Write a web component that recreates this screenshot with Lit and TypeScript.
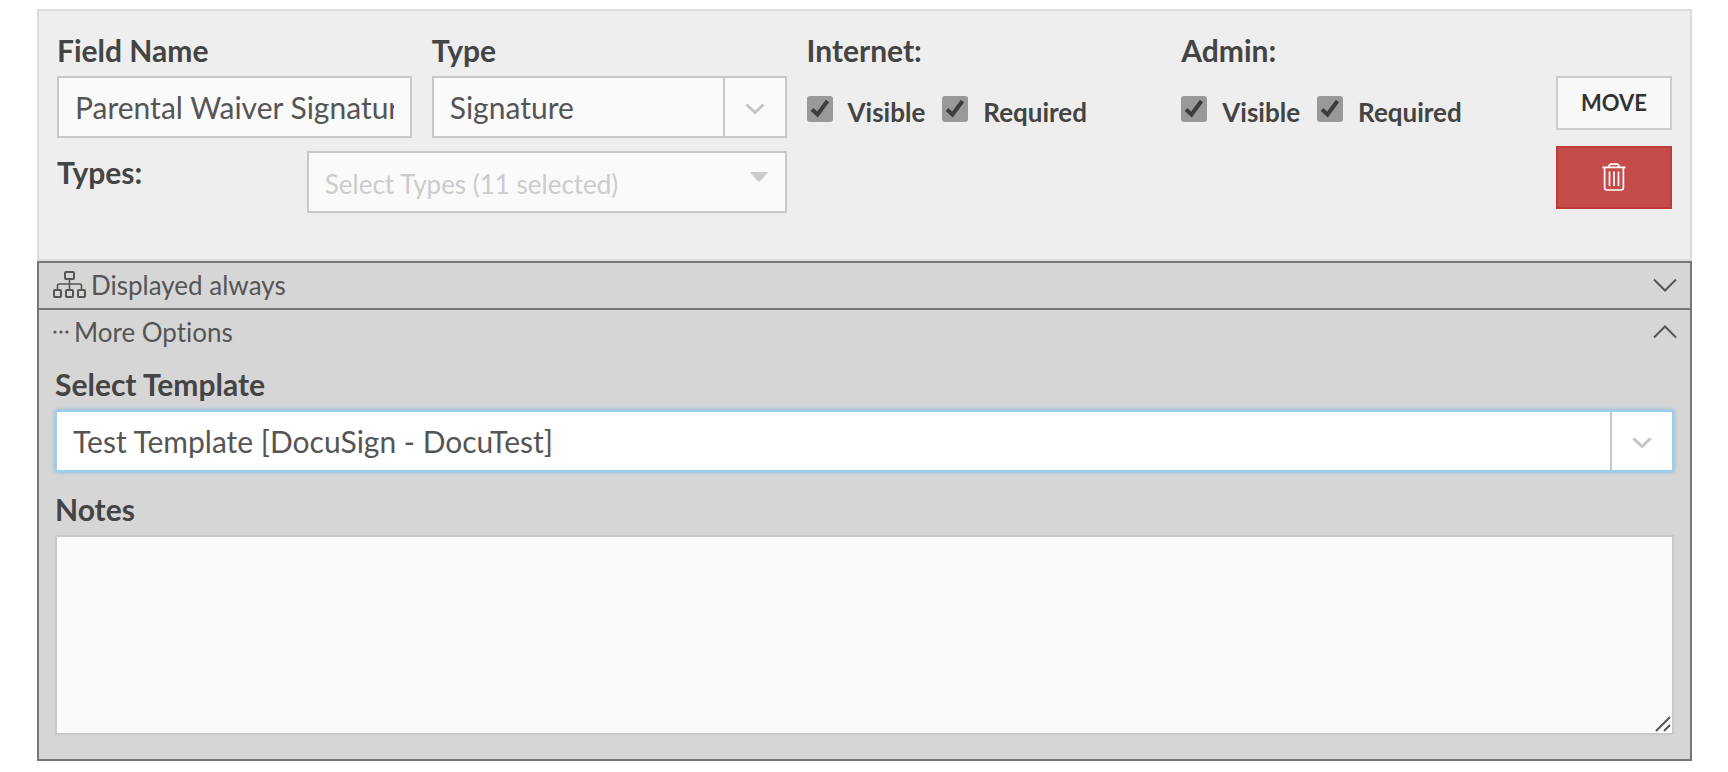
import { LitElement, html, css } from "lit";
import { customElement, state } from "lit/decorators.js";

const chevron = html`<svg class="chevron" viewBox="0 0 20 12" aria-hidden="true">
  <path d="M1.5 1.5 L10 9.5 L18.5 1.5" />
</svg>`;

@customElement("app-root")
export class AppRoot extends LitElement {
  @state() private rulesOpen = false;
  @state() private optionsOpen = true;

  static styles = css`
    :host {
      display: block;
      padding: 9px 36px 11px 37px;
      background: #fff;
      color: #444;
      font: 400 26px/32px Lato, "Open Sans", sans-serif;
      font-variant-ligatures: none;
    }
    * {
      box-sizing: border-box;
    }
    input,
    select,
    textarea,
    button {
      margin: 0;
      font: inherit;
      font-variant-ligatures: none;
      color: inherit;
      border-radius: 0;
      outline: none;
    }
    button {
      cursor: pointer;
    }
    svg {
      display: block;
      fill: none;
      stroke: currentColor;
    }
    .summary {
      display: grid;
      grid-template-columns: repeat(4, minmax(0, 1fr)) 116px;
      gap: 13px 20px;
      padding: 21px 18px 46px;
      background: #eee;
      border: 2px solid #dcdcdc;
    }
    .field {
      display: flex;
      flex-direction: column;
      gap: 8px;
      min-width: 0;
    }
    .title {
      font-size: 30px;
      line-height: 36px;
      font-weight: 700;
    }
    .control {
      width: 100%;
      height: 62px;
      padding: 0 16px;
      font-size: 30px;
      line-height: 40px;
      color: #555;
      background: #fafafa;
      border: 2px solid #c8c8c8;
      appearance: none;
    }
    .picker {
      display: grid;
      grid-template-columns: minmax(0, 1fr) 64px;
    }
    .picker > * {
      grid-row: 1;
    }
    .picker select {
      grid-column: 1 / 3;
    }
    .arrow {
      grid-column: 2;
      display: flex;
      align-items: center;
      justify-content: center;
      margin: 2px 2px 2px 0;
      border-left: 2px solid #c8c8c8;
      color: #c4c4c4;
      pointer-events: none;
    }
    .chevron {
      width: 20px;
      height: 12px;
      margin-top: 4px;
      stroke-width: 3;
    }
    .focused .control {
      background: #fff;
      border-color: #9bcfef;
      border-radius: 2px;
      box-shadow: 0 0 4px #7fb4dc;
    }
    .types {
      grid-column: 1 / 3;
      display: grid;
      grid-template-columns: repeat(3, minmax(0, 1fr));
      gap: 20px;
    }
    .types .title {
      padding-top: 3px;
    }
    .types .picker {
      grid-column: span 2;
    }
    .types .control {
      padding-top: 4px;
      font-size: 26px;
      color: #ccc;
    }
    .types .arrow {
      align-items: flex-start;
      padding: 19px 0 0 10px;
      border: 0;
    }
    .caret {
      width: 18px;
      height: 10px;
      fill: #ccc;
      stroke: none;
    }
    .checks {
      display: flex;
      gap: 17px;
      padding-top: 20px;
      font-weight: 700;
    }
    .check {
      display: flex;
      gap: 15px;
    }
    .box {
      display: grid;
      width: 26px;
      height: 26px;
    }
    .box > * {
      grid-area: 1 / 1;
    }
    .box input {
      width: 26px;
      height: 26px;
      appearance: none;
      background: #999;
      border-radius: 3px;
    }
    .box svg {
      width: 26px;
      height: 26px;
      stroke: #3d3d3d;
      stroke-width: 4;
      pointer-events: none;
      visibility: hidden;
    }
    .box input:checked + svg {
      visibility: visible;
    }
    .actions {
      grid-column: 5;
      grid-row: 1 / 3;
      display: flex;
      flex-direction: column;
      gap: 16px;
      padding-top: 44px;
    }
    .move {
      height: 54px;
      padding: 0;
      font-size: 22px;
      font-weight: 700;
      color: #333;
      background: #f8f8f8;
      border: 2px solid #ccc;
    }
    .remove {
      display: flex;
      align-items: flex-start;
      justify-content: center;
      height: 63px;
      padding: 15px 0 0;
      color: #fff;
      background: #c44d4b;
      border: 2px solid #be3c38;
    }
    .trash {
      width: 24px;
      height: 28px;
    }
    .details {
      background: #d6d6d6;
      border: 2px solid #777;
      color: #555;
    }
    .toggle {
      display: flex;
      align-items: center;
      gap: 5px;
      width: 100%;
      height: 45px;
      padding: 0 13px 2px 14px;
      text-align: left;
      background: none;
      border: 0;
    }
    .toggle span {
      flex: 1;
    }
    .more {
      height: 47px;
      border-top: 2px solid #777;
    }
    .fold {
      width: 24px;
      height: 14px;
      stroke-width: 2;
    }
    .tree {
      width: 33px;
      height: 27px;
      stroke-width: 2;
    }
    .dots {
      width: 16px;
      height: 4px;
      fill: currentColor;
      stroke: none;
    }
    .body {
      display: flex;
      flex-direction: column;
      gap: 19px;
      padding: 11px 16px 24px;
    }
    .body .title {
      color: #444;
    }
    .notes {
      display: grid;
    }
    .notes > * {
      grid-area: 1 / 1;
    }
    .notes .control {
      display: block;
      height: 200px;
      padding: 12px 16px;
      resize: none;
    }
    .grip {
      place-self: end;
      width: 16px;
      height: 16px;
      margin: 3px;
      stroke: #555;
      stroke-width: 2;
      pointer-events: none;
    }
  `;

  private check(id: string, text: string) {
    return html`<label class="check" for=${id}>
      <span class="box">
        <input id=${id} type="checkbox" checked />
        <svg viewBox="0 0 26 26" aria-hidden="true"><path d="M5 13.5 L10.5 18.5 L20.5 5" /></svg>
      </span>
      ${text}
    </label>`;
  }

  private access(name: string) {
    const id = name.toLowerCase();
    return html`<div class="field" role="group" aria-labelledby=${id}>
      <div class="title" id=${id}>${name}:</div>
      <div class="checks">
        ${this.check(`${id}-visible`, "Visible")} ${this.check(`${id}-required`, "Required")}
      </div>
    </div>`;
  }

  private fold(open: boolean) {
    return html`<svg class="fold" viewBox="0 0 24 14" aria-hidden="true">
      <path d=${open ? "M1 12.5 L12 1.5 L23 12.5" : "M1 1.5 L12 12.5 L23 1.5"} />
    </svg>`;
  }

  render() {
    return html`
      <section class="summary">
        <div class="field">
          <label class="title" for="name">Field Name</label>
          <input class="control" id="name" type="text" value="Parental Waiver Signature" />
        </div>
        <div class="field">
          <label class="title" for="type">Type</label>
          <div class="picker">
            <select class="control" id="type">
              <option>Signature</option>
            </select>
            <span class="arrow">${chevron}</span>
          </div>
        </div>
        ${this.access("Internet")} ${this.access("Admin")}
        <div class="types">
          <label class="title" for="types">Types:</label>
          <div class="picker">
            <select class="control" id="types">
              <option>Select Types (11 selected)</option>
            </select>
            <span class="arrow">
              <svg class="caret" viewBox="0 0 18 10" aria-hidden="true">
                <path d="M1 0 H17 Q18.5 0 17.4 1.2 L10 9.3 Q9 10.4 8 9.3 L.6 1.2 Q-.5 0 1 0 Z" />
              </svg>
            </span>
          </div>
        </div>
        <div class="actions">
          <button class="move" type="button">MOVE</button>
          <button class="remove" type="button" aria-label="Delete field">
            <svg class="trash" viewBox="0 0 24 28" aria-hidden="true">
              <path
                stroke-width="1.7"
                d="M.5 4.4 H23.5 M6.9 4 Q7 1.1 9.3 1.1 H14.7 Q17 1.1 17.1 4 M2.6 4.5 V24.6 Q2.6 27 5 27 H19 Q21.4 27 21.4 24.6 V4.5 M7.5 8.5 V23 M12 8.5 V23 M16.5 8.5 V23"
              />
            </svg>
          </button>
        </div>
      </section>

      <section class="details">
        <button
          class="toggle"
          type="button"
          aria-expanded=${this.rulesOpen}
          @click=${() => (this.rulesOpen = !this.rulesOpen)}
        >
          <svg class="tree" viewBox="0 0 33 27" aria-hidden="true">
            <rect x="12" y="1" width="9" height="7" rx="1" />
            <rect x="1" y="19" width="7" height="7" rx="1" />
            <rect x="13" y="19" width="7" height="7" rx="1" />
            <rect x="25" y="19" width="7" height="7" rx="1" />
            <path stroke-width="1.6" d="M16.5 8 V19 M4.5 19 V14.5 Q4.5 13 6 13 H27 Q28.5 13 28.5 14.5 V19" />
          </svg>
          <span>Displayed always</span>
          ${this.fold(this.rulesOpen)}
        </button>
        <button
          class="toggle more"
          type="button"
          aria-expanded=${this.optionsOpen}
          @click=${() => (this.optionsOpen = !this.optionsOpen)}
        >
          <svg class="dots" viewBox="0 0 16 4" aria-hidden="true">
            <circle cx="2" cy="2" r="1.6" />
            <circle cx="8" cy="2" r="1.6" />
            <circle cx="14" cy="2" r="1.6" />
          </svg>
          <span>More Options</span>
          ${this.fold(this.optionsOpen)}
        </button>
        <div class="body" ?hidden=${!this.optionsOpen}>
          <div class="field">
            <label class="title" for="template">Select Template</label>
            <div class="picker focused">
              <select class="control" id="template">
                <option>Test Template [DocuSign - DocuTest]</option>
              </select>
              <span class="arrow">${chevron}</span>
            </div>
          </div>
          <div class="field">
            <label class="title" for="notes">Notes</label>
            <div class="notes">
              <textarea class="control" id="notes"></textarea>
              <svg class="grip" viewBox="0 0 16 16" aria-hidden="true">
                <path d="M1 15 L15 1 M9 15 L15 9" />
              </svg>
            </div>
          </div>
        </div>
      </section>
    `;
  }
}
